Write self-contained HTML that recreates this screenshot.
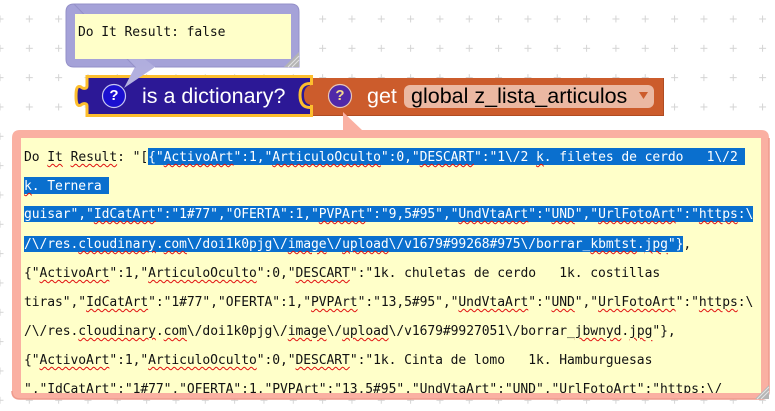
<!DOCTYPE html>
<html><head><meta charset="utf-8">
<style>
html,body{margin:0;padding:0;background:#fff;}
#p{position:relative;width:775px;height:411px;overflow:hidden;background:#fff;}
svg{position:absolute;left:0;top:0;}
.clip{position:absolute;left:21px;top:138px;width:740px;height:255px;overflow:hidden;background:#ffffc9;}
.l{position:absolute;left:3px;white-space:pre;font-family:"DejaVu Sans Mono","Liberation Mono",monospace;font-size:13px;letter-spacing:-.07px;line-height:16px;height:16px;color:#111;}
.s{background:#0a6fce;color:#fff;padding-top:1px;}
.w{text-decoration:underline wavy #e01010 1px;text-underline-offset:2px;}
.t{position:absolute;font-family:"Liberation Sans",sans-serif;font-size:21.5px;line-height:26px;white-space:pre;}
.h{position:absolute;font-family:"Liberation Sans",sans-serif;font-weight:bold;font-size:15px;line-height:16px;text-align:center;width:24px;color:#fff;}
.r{position:absolute;left:78px;top:25px;font-family:"DejaVu Sans Mono","Liberation Mono",monospace;font-size:13px;letter-spacing:-.07px;line-height:16px;color:#111;white-space:pre;}
</style></head><body><div id="p">
<svg width="775" height="411">
<defs>
<pattern id="g" x="-3.5" y="15.5" width="29.33" height="29.33" patternUnits="userSpaceOnUse"><path d="M0 3.5H7M3.5 0V7" stroke="#d4d4d4" stroke-width="1" fill="none"/></pattern>
<linearGradient id="tl" x1="0" y1="0" x2="0" y2="1"><stop offset="0" stop-color="#a5a2d8"/><stop offset="1" stop-color="#b5b3e0"/></linearGradient>
</defs>
<rect width="775" height="411" fill="url(#g)"/>
<path d="M87 76.500H311.500V115.500H87V106C87 103 83 103 81 105C77 107 76 103 76 96C76 89 77 85 81 87C83 89 87 89 87 86Z" fill="#2c1896" stroke="#fdbe2e" stroke-width="3"/>
<path d="M313 78H663V115H313V105C306 105 304 101 304 95C304 90 306 85 313 85Z" fill="#cc5c2c"/>
<path d="M663.500 78V115.500H313" fill="none" stroke="#b04c22" stroke-width="1"/>
<path d="M310 83.500C303 83.500 300 88 300 95C300 103 303 107.500 310 107.500" fill="none" stroke="#fdbe2e" stroke-width="3"/>
<rect x="404" y="85" width="250" height="23" rx="6" fill="#ebb8a2"/>
<path d="M639 92H648L643.500 99Z" fill="#cc5c2c"/>
<circle cx="114" cy="96" r="11.500" fill="#1a0fd0" stroke="#c8c8f0" stroke-width="1.200"/>
<circle cx="340" cy="96" r="11.500" fill="#5028a8" stroke="#e8c8b8" stroke-width="1.200"/>
<path d="M74 4H291Q299 4 299 12V67H155L124 88L135 67H74Q66 67 66 59V12Q66 4 74 4Z" fill="url(#tl)"/>
<path d="M74 4H291Q299 4 299 12V67H155M135 67H74Q66 67 66 59V12Q66 4 74 4Z" fill="#a5a2d8" stroke="#9490c8" stroke-width="1"/>
<rect x="75" y="14" width="216" height="45" fill="#ffffc9"/>
<path d="M299 52V67H284Z" fill="#b4b4b4"/>
<path d="M292 67L299 60M288 67L299 56" stroke="#e4e4e4" stroke-width="1"/>
<path d="M20 130H343V112L362 130H761Q769 130 769 138V391Q769 399 761 399H20Q12 399 12 391V138Q12 130 20 130Z" fill="#fab0a2"/>
<path d="M769 138V391Q769 399 761 399H20Q12 399 12 391" fill="none" stroke="#ee9a8c" stroke-width="1.500"/>
<path d="M755 399L769 385V399Z" fill="#b4b4b4"/>
<path d="M761 399L769 391M757 399L769 387" stroke="#e4e4e4" stroke-width="1"/>
</svg>
<div class="r">Do It Result: false</div>
<div class="t" style="left:142px;top:83px;color:#fff">is a dictionary?</div>
<div class="t" style="left:367px;top:83px;color:#fff">get</div>
<div class="t" style="left:411px;top:83px;color:#000">global z_lista_articulos</div>
<div class="h" style="left:102px;top:88px">?</div>
<div class="h" style="left:328px;top:88px;color:#f4d890">?</div>
<div class="clip">
<div class="l" style="top:12px">Do <span class="w">It</span> <span class="w">Result</span>: "[<span class="s" style="padding-top:2px">{"<span class="w">ActivoArt</span>":1,"<span class="w">ArticuloOculto</span>":0,"<span class="w">DESCART</span>":"1\/2 <span class="w">k</span>. filetes de cerdo   1\/2 </span></div>
<div class="l" style="top:41px"><span class="s" style="padding-top:2px"><span class="w">k</span>. Ternera </span></div>
<div class="l" style="top:69px"><span class="s">guisar","<span class="w">IdCatArt</span>":"1#77","OFERTA":1,"<span class="w">PVPArt</span>":"9,5#95","<span class="w">UndVtaArt</span>":"<span class="w">UND</span>","<span class="w">UrlFotoArt</span>":"<span class="w">https</span>:\</span></div>
<div class="l" style="top:99px"><span class="s">/\/res.<span class="w">cloudinary</span>.<span class="w">com</span>\/doi1k0pjg\/<span class="w">image</span>\/<span class="w">upload</span>\/v1679#99268#975\/borrar_<span class="w">kbmtst</span>.<span class="w">jpg</span>"}</span>,</div>
<div class="l" style="top:128px">{"<span class="w">ActivoArt</span>":1,"<span class="w">ArticuloOculto</span>":0,"<span class="w">DESCART</span>":"1k. chuletas de cerdo   1k. costillas</div>
<div class="l" style="top:157px">tiras","<span class="w">IdCatArt</span>":"1#77","OFERTA":1,"<span class="w">PVPArt</span>":"13,5#95","<span class="w">UndVtaArt</span>":"<span class="w">UND</span>","<span class="w">UrlFotoArt</span>":"<span class="w">https</span>:\</div>
<div class="l" style="top:186px">/\/res.<span class="w">cloudinary</span>.<span class="w">com</span>\/doi1k0pjg\/<span class="w">image</span>\/<span class="w">upload</span>\/v1679#9927051\/borrar_<span class="w">jbwnyd</span>.<span class="w">jpg</span>"},</div>
<div class="l" style="top:215px">{"<span class="w">ActivoArt</span>":1,"<span class="w">ArticuloOculto</span>":0,"<span class="w">DESCART</span>":"1k. Cinta de lomo   1k. Hamburguesas</div>
<div class="l" style="top:244px">","IdCatArt":"1#77","OFERTA":1,"PVPArt":"13,5#95","UndVtaArt":"UND","UrlFotoArt":"https:\/</div>
</div>
</div></body></html>
